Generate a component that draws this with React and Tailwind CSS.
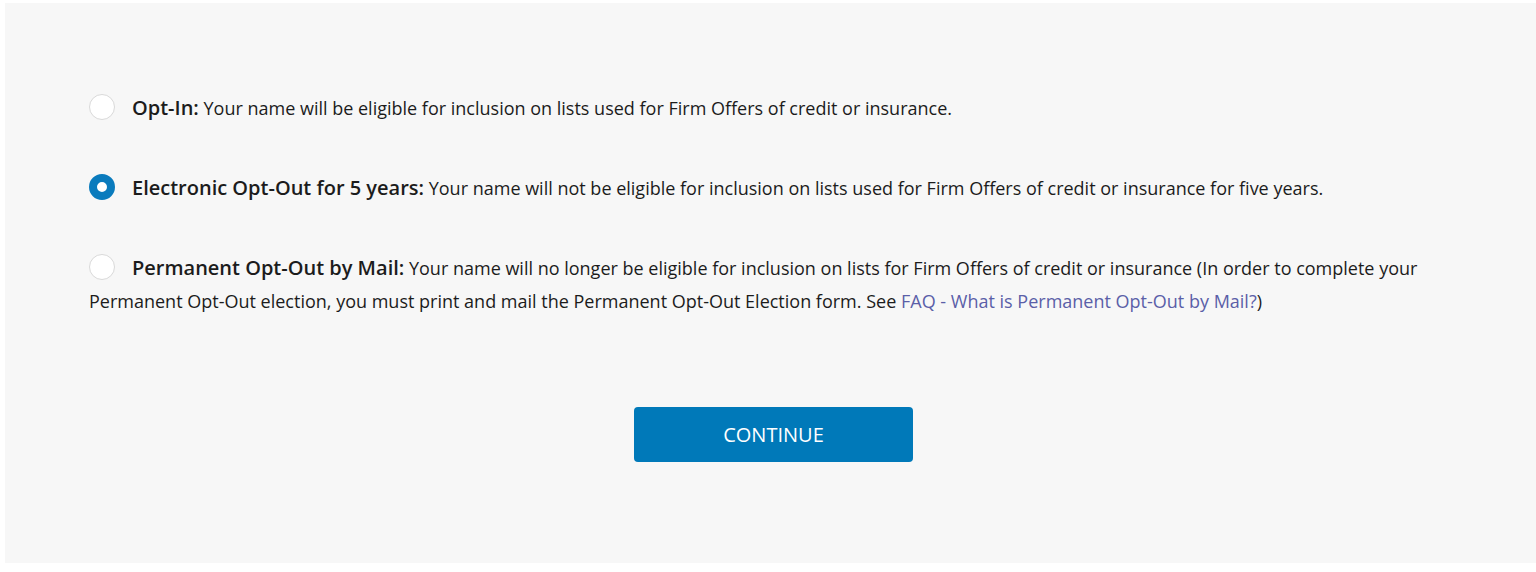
export default function App() {
    const radioBase = "inline-block align-middle w-[26px] h-[26px] rounded-full mr-[17px] relative -top-[3px]";

    return (
        <div className="w-[1536px] h-[572px] bg-white pl-[5px] pt-[3px] font-['Open_Sans',sans-serif]">
            <div className="h-[560px] bg-[#f7f7f7] pl-[84px] pr-[90px] pt-[89px]">
                {/* OPTIONS */}
                <div className="text-[18px] leading-[33px] text-[#1c1c1c]">
                    <p>
                        <span className={`${radioBase} bg-white border border-[#d9d9d9]`}></span>
                        <b className="text-[20px] leading-none font-semibold">Opt-In:</b> Your name will be eligible for inclusion on lists used for Firm Offers of credit or insurance.
                    </p>
                    <p className="mt-[47px]">
                        <span className={`${radioBase} bg-white border-[8px] border-[#0a7bbd]`}></span>
                        <b className="text-[20px] leading-none font-semibold">Electronic Opt-Out for 5 years:</b> Your name will not be eligible for inclusion on lists used for Firm Offers of credit or insurance for five years.
                    </p>
                    <p className="mt-[47px]">
                        <span className={`${radioBase} bg-white border border-[#d9d9d9]`}></span>
                        <b className="text-[20px] leading-none font-semibold">Permanent Opt-Out by Mail:</b> Your name will no longer be eligible for inclusion on lists for Firm Offers of credit or insurance (In order to complete your Permanent Opt-Out election, you must print and mail the Permanent Opt-Out Election form. See{' '}
                        <a className="text-[#5b5fa8]" href="#">FAQ - What is Permanent Opt-Out by Mail?</a>)
                    </p>
                </div>

                {/* CONTINUE */}
                <div className="flex justify-center mt-[89px] pl-[12px]">
                    <button className="w-[279px] h-[55px] bg-[#0079b9] rounded-[4px] text-white text-[20px] leading-none">
                        CONTINUE
                    </button>
                </div>
            </div>
        </div>
    );
}
